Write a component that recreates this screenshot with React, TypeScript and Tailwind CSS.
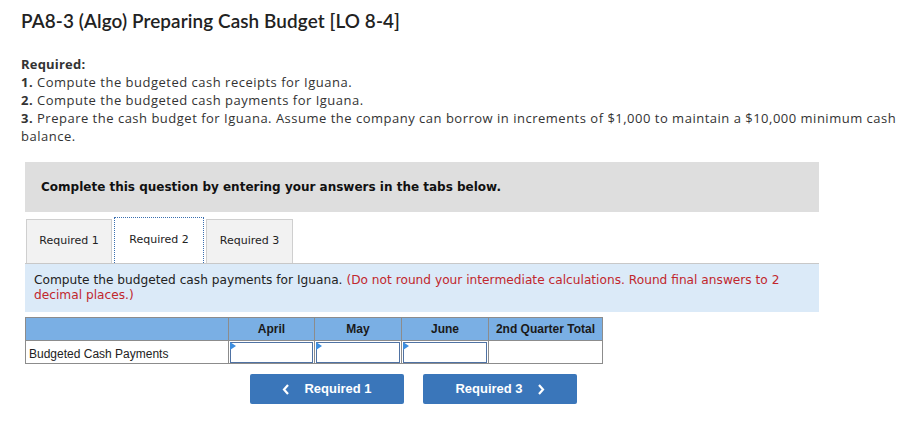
import React from "react";

function Cell({ input }: { input?: boolean }) {
  return (
    <td className="border border-[#8c8c8c] p-0 h-[23px] bg-white">
      {input ? (
        <div className="relative h-[21px] mx-[1px] border-[1.5px] border-[#4f72a3] bg-white">
          <div className="absolute left-[-1px] top-[-1px] w-0 h-0 border-t-[4px] border-b-[4px] border-l-[6px] border-t-transparent border-b-transparent border-l-[#3d8ee0]" />
        </div>
      ) : null}
    </td>
  );
}

export default function App() {
  return (
    <div className="w-[914px] h-[438px] bg-white relative overflow-hidden">
      <div className="pl-[21px] pt-[9px]">
        <h1 className="text-[18.9px] font-semibold text-[#222] leading-[24px] font-['Lato',sans-serif] tracking-[0.1px]">
          PA8-3 (Algo) Preparing Cash Budget [LO 8-4]
        </h1>
        <div className="mt-[22px] text-[13px] leading-[18px] text-[#333] font-['Open_Sans',sans-serif] tracking-[0.5px]">
          <div className="font-bold tracking-[0.2px]">Required:</div>
          <div><span className="font-bold">1.</span> Compute the budgeted cash receipts for Iguana.</div>
          <div><span className="font-bold">2.</span> Compute the budgeted cash payments for Iguana.</div>
          <div className="w-[878px]"><span className="font-bold">3.</span> Prepare the cash budget for Iguana. Assume the company can borrow in increments of $1,000 to maintain a $10,000 minimum cash balance.</div>
        </div>
      </div>

      <div className="ml-[25px] w-[794px] mt-[17px] h-[50px] bg-[#dedede] flex items-center pl-[16px] font-['DejaVu_Sans',Verdana,sans-serif] text-[12px] font-bold text-[#111]">
        Complete this question by entering your answers in the tabs below.
      </div>

      <div className="ml-[26px] mt-[5px] flex items-end h-[46px] font-['DejaVu_Sans',Verdana,sans-serif] text-[11px] text-[#222]">
        <div className="w-[86px] h-[44px] bg-[#f2f2f2] border border-[#cfcfcf] border-b-0 flex items-center justify-center">Required 1</div>
        <div className="ml-[2px] w-[90px] h-[46px] bg-white border border-dotted border-[#3a6fb0] border-b-0 flex items-center justify-center">Required 2</div>
        <div className="ml-[2px] w-[87px] h-[44px] bg-[#f2f2f2] border border-[#cfcfcf] border-b-0 flex items-center justify-center">Required 3</div>
      </div>

      <div className="ml-[25px] w-[794px] h-[49px] bg-[#dbeaf8] pl-[9px] pt-[9px] font-['DejaVu_Sans',Verdana,sans-serif] text-[12.2px] leading-[14.5px] text-[#222] border-t border-[#c8c8c8]">
        Compute the budgeted cash payments for Iguana.{" "}
        <span className="text-[#c1272d]">(Do not round your intermediate calculations. Round final answers to 2 decimal places.)</span>
      </div>

      <table className="ml-[25px] mt-[5px] border-collapse font-['Liberation_Sans',Arial,sans-serif] text-[12px]">
        <thead>
          <tr className="bg-[#7aafe4] h-[23px]">
            <th className="border border-[#8c8c8c] w-[203px]"></th>
            <th className="border border-[#8c8c8c] w-[86px] font-bold text-[#1a1a1a]">April</th>
            <th className="border border-[#8c8c8c] w-[87px] font-bold text-[#1a1a1a]">May</th>
            <th className="border border-[#8c8c8c] w-[87px] font-bold text-[#1a1a1a]">June</th>
            <th className="border border-[#8c8c8c] w-[114px] font-bold text-[#1a1a1a]">2nd Quarter Total</th>
          </tr>
        </thead>
        <tbody>
          <tr>
            <td className="border border-[#8c8c8c] h-[23px] pl-[3px] pt-[3px] text-[#222]">Budgeted Cash Payments</td>
            <Cell input />
            <Cell input />
            <Cell input />
            <Cell />
          </tr>
        </tbody>
      </table>

      <div className="mt-[10px] flex gap-[19px] ml-[250px] font-['Liberation_Sans',Arial,sans-serif] text-[13px] font-bold text-white">
        <div className="w-[154px] h-[30px] bg-[#3a76ba] rounded-[2px] flex items-center justify-center gap-[14px]">
          <svg width="8" height="11" viewBox="0 0 8 11"><path d="M6 1 L2 5.5 L6 10" stroke="white" strokeWidth="2.2" fill="none" /></svg>
          <span>Required 1</span>
        </div>
        <div className="w-[154px] h-[30px] bg-[#3a76ba] rounded-[2px] flex items-center justify-center gap-[14px]">
          <span>Required 3</span>
          <svg width="8" height="11" viewBox="0 0 8 11"><path d="M2 1 L6 5.5 L2 10" stroke="white" strokeWidth="2.2" fill="none" /></svg>
        </div>
      </div>
    </div>
  );
}
